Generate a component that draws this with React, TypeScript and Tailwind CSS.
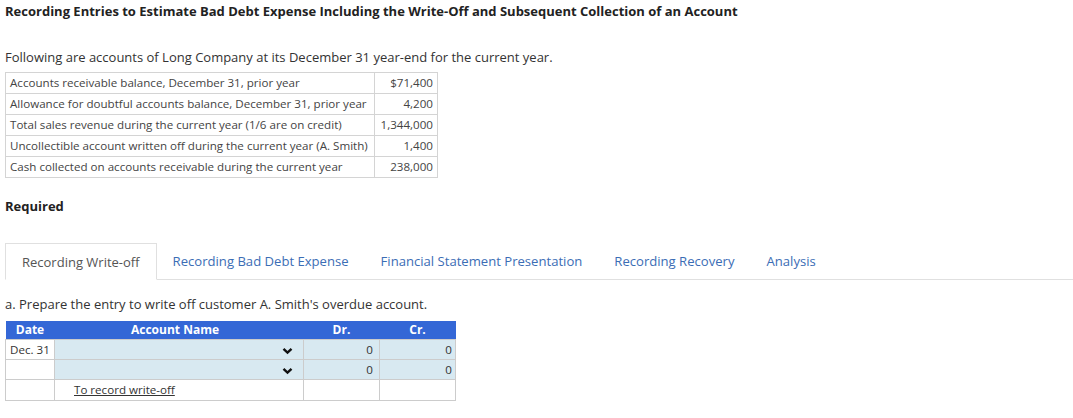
const facts: [string, string][] = [
  ['Accounts receivable balance, December 31, prior year', '$71,400'],
  ['Allowance for doubtful accounts balance, December 31, prior year', '4,200'],
  ['Total sales revenue during the current year (1/6 are on credit)', '1,344,000'],
  ['Uncollectible account written off during the current year (A. Smith)', '1,400'],
  ['Cash collected on accounts receivable during the current year', '238,000'],
];

const tabs = [
  'Recording Write-off',
  'Recording Bad Debt Expense',
  'Financial Statement Presentation',
  'Recording Recovery',
  'Analysis',
];

function Chevron() {
  return (
    <svg width="11" height="8" viewBox="0 0 11 8" className="shrink-0">
      <path d="M1.5 1.8 L5.5 5.6 L9.5 1.8" fill="none" stroke="#111" strokeWidth="2.4" />
    </svg>
  );
}

export default function App() {
  return (
    <div className="w-[1073px] h-[418px] bg-white text-[#333] font-['Open_Sans',sans-serif] pl-[5px] pt-[2px]">
      <h1 className="text-[13px] font-bold leading-[18px] text-[#222]">
        Recording Entries to Estimate Bad Debt Expense Including the Write-Off and Subsequent Collection of an Account
      </h1>

      <p className="mt-[28px] text-[13px] leading-[18px]">
        Following are accounts of Long Company at its December 31 year-end for the current year.
      </p>

      {/* Facts table */}
      <table className="mt-[6px] border-collapse text-[11.6px] text-[#444]">
        <tbody>
          {facts.map(([label, value]) => (
            <tr key={label} className="h-[21px]">
              <td className="border border-[#d4d4d4] w-[369px] px-[4px] leading-[14px]">{label}</td>
              <td className="border border-[#d4d4d4] w-[63px] px-[4px] text-right leading-[14px]">{value}</td>
            </tr>
          ))}
        </tbody>
      </table>

      <p className="mt-[19px] text-[13px] font-bold leading-[18px] text-[#222]">Required</p>

      {/* Tabs */}
      <div className="mt-[28px] flex items-end border-b border-[#e0e0e0] h-[37px]">
        {tabs.map((t, i) => (
          <div
            key={t}
            className={
              i === 0
                ? 'h-[37px] -mb-px px-[16px] pt-[2px] flex items-center border border-[#e0e0e0] border-b-white bg-white text-[13px] text-[#555]'
                : 'h-[37px] px-[16px] pt-[2px] flex items-center text-[13.1px] text-[#3b6db5]'
            }
          >
            {t}
          </div>
        ))}
      </div>

      <p className="mt-[15px] text-[13px] leading-[18px] text-[#333]">
        a. Prepare the entry to write off customer A. Smith's overdue account.
      </p>

      {/* Journal */}
      <table className="mt-[8px] border-collapse text-[11.6px] text-[#333]">
        <thead>
          <tr className="h-[18px] bg-[#3467d6] text-white font-bold text-[12px]">
            <th className="w-[49px] text-center">Date</th>
            <th className="w-[249px] text-center pr-[8px]">Account Name</th>
            <th className="w-[76px] text-center">Dr.</th>
            <th className="w-[76px] text-center">Cr.</th>
          </tr>
        </thead>
        <tbody>
          {[0, 1].map((r) => (
            <tr key={r} className="h-[20px]">
              <td className="border border-[#ccc] px-[4px] leading-[14px]">{r === 0 ? 'Dec. 31' : ''}</td>
              <td className="border border-[#ccc] bg-[#d8e9f1] px-[8px]">
                <div className="flex justify-end pr-[2px] pt-[2px]">
                  <Chevron />
                </div>
              </td>
              <td className="border border-[#ccc] bg-[#d8e9f1] text-right pr-[6px] leading-[14px]">0</td>
              <td className="border border-[#ccc] bg-[#d8e9f1] text-right pr-[3px] leading-[14px]">0</td>
            </tr>
          ))}
          <tr className="h-[21px]">
            <td className="border border-[#ccc]"></td>
            <td className="border border-[#ccc] pl-[19px]">
              <span className="underline text-[#333]">To record write-off</span>
            </td>
            <td className="border border-[#ccc]"></td>
            <td className="border border-[#ccc]"></td>
          </tr>
        </tbody>
      </table>
    </div>
  );
}
